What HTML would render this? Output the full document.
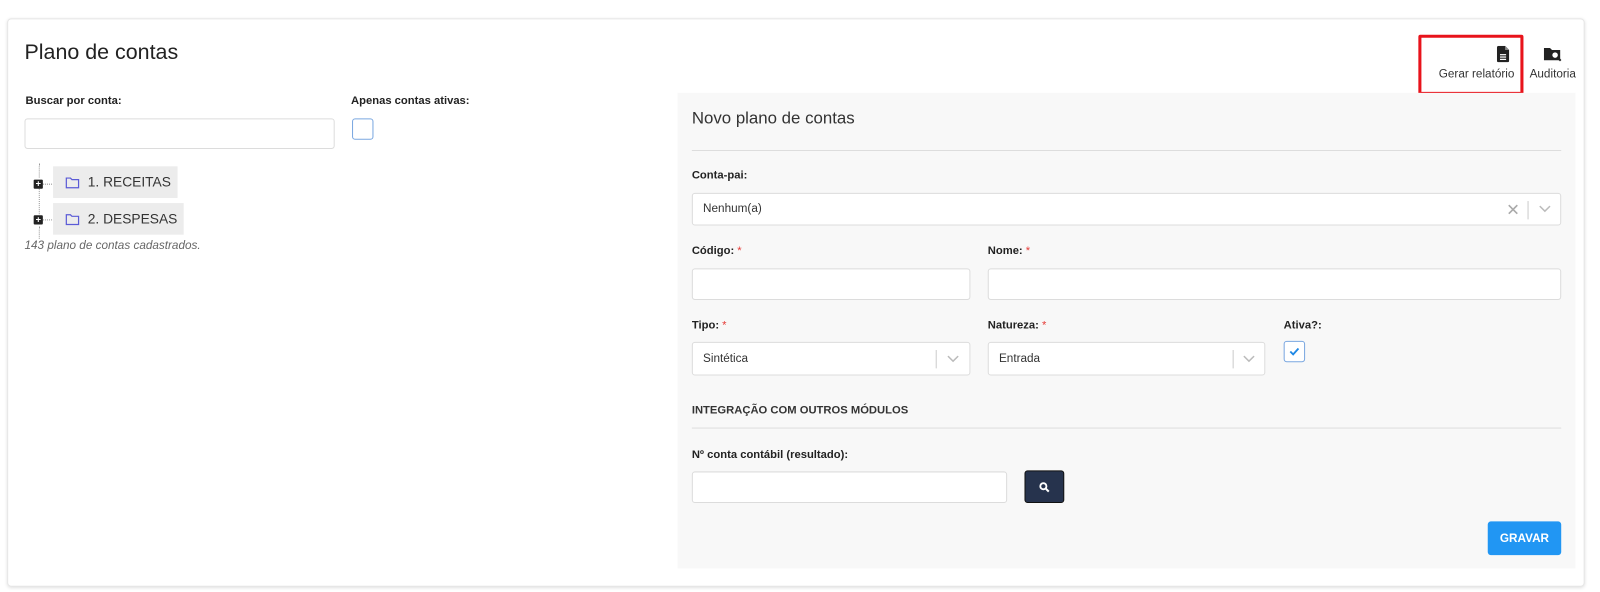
<!DOCTYPE html>
<html><head><meta charset="utf-8">
<style>
*{box-sizing:border-box;margin:0;padding:0}
body{width:1600px;height:592px;background:#fff;font-family:"Liberation Sans",Arial,sans-serif;overflow:hidden;color:#212529}
#w{position:relative;width:1568px;height:580px;transform:scale(1.0204);transform-origin:0 0}
.a{position:absolute}
.card{left:7px;top:18px;width:1546px;height:557px;border:1px solid #e6e6e6;border-radius:4px;box-shadow:0 1px 3px rgba(0,0,0,.12);background:#fff}
.lbl{font-size:11px;font-weight:bold;color:#222}
.req{color:#e53935;font-weight:normal;margin-left:3px}
.inp{background:#fff;border:1px solid #dcdcdc;border-radius:3px}
.sel{font-size:11.5px;color:#333;padding-left:10px;display:flex;align-items:center}
.node{background:#ececec;font-size:13.5px;color:#333;display:flex;align-items:center;padding-left:12px}
.plus{width:9px;height:9px;background:#222;border-radius:1px;color:#fff;font-size:9px;line-height:9px;text-align:center;font-weight:bold}
.dot{border-left:1px dotted #999;width:1px}
.hd{border-top:1px dotted #999;height:1px}
</style></head><body><div id="w">
<div class="a card"></div>
<div class="a" style="left:24px;top:40px;font-size:21px;color:#222">Plano de contas</div>

<div class="a" style="left:1390px;top:34px;width:103px;height:59px;border:3px solid #e8131b;border-radius:2px"></div>
<svg class="a" style="left:1467px;top:45px" width="12" height="16" viewBox="0 0 12 16"><path d="M0 1.5C0 .7.7 0 1.5 0H8l4 4v10.5c0 .8-.7 1.5-1.5 1.5h-9C.7 16 0 15.3 0 14.5z" fill="#222"/><path d="M8 0v4h4" fill="#888"/><rect x="3" y="8" width="6" height="1.2" fill="#fff"/><rect x="3" y="10.3" width="6" height="1.2" fill="#fff"/><rect x="3" y="12.6" width="6" height="1.2" fill="#fff"/></svg>
<div class="a" style="left:1410px;top:67px;font-size:11.5px;color:#333">Gerar relatório</div>
<svg class="a" style="left:1513px;top:45px" width="18" height="16" viewBox="0 0 18 16"><path d="M0 2h6l2 2h8v10H0z" fill="#222"/><circle cx="11" cy="9" r="3.5" fill="#fff" stroke="#222" stroke-width="1.6"/><path d="M13.5 11.5l3 3" stroke="#222" stroke-width="2"/></svg>
<div class="a" style="left:1499px;top:67px;font-size:11.5px;color:#333">Auditoria</div>

<div class="a lbl" style="left:25px;top:93px">Buscar por conta:</div>
<div class="a inp" style="left:24px;top:116px;width:304px;height:30px"></div>
<div class="a lbl" style="left:344px;top:93px">Apenas contas ativas:</div>
<div class="a" style="left:345px;top:116px;width:21px;height:21px;border:1px solid #7aa7e0;border-radius:3px;background:#fff"></div>

<div class="a dot" style="left:38px;top:160px;height:14px"></div>
<div class="a dot" style="left:38px;top:185px;height:25px"></div>
<div class="a dot" style="left:38px;top:222px;height:12px"></div>
<div class="a hd" style="left:42px;top:180px;width:9px"></div>
<div class="a hd" style="left:42px;top:215px;width:9px"></div>
<div class="a plus" style="left:33px;top:176px">+</div>
<div class="a plus" style="left:33px;top:211px">+</div>
<div class="a node" style="left:52px;top:163px;width:122px;height:31px"><svg width="14" height="12" viewBox="0 0 14 12" style="margin-right:8px"><path d="M1 1.5h4l1.5 1.5H13v8H1z" fill="none" stroke="#5b5bd6" stroke-width="1.2"/></svg>1. RECEITAS</div>
<div class="a node" style="left:52px;top:199px;width:128px;height:31px"><svg width="14" height="12" viewBox="0 0 14 12" style="margin-right:8px"><path d="M1 1.5h4l1.5 1.5H13v8H1z" fill="none" stroke="#5b5bd6" stroke-width="1.2"/></svg>2. DESPESAS</div>
<div class="a" style="left:24px;top:235px;font-size:11.5px;font-style:italic;color:#666">143 plano de contas cadastrados.</div>

<div class="a" style="left:664px;top:91px;width:880px;height:466px;background:#f8f8f8"></div>
<div class="a" style="left:678px;top:107px;font-size:16.5px;color:#333">Novo plano de contas</div>
<div class="a" style="left:678px;top:147px;width:852px;border-top:1px solid #ddd"></div>
<div class="a lbl" style="left:678px;top:166px">Conta-pai:</div>
<div class="a inp sel" style="left:678px;top:189px;width:852px;height:32px">Nenhum(a)</div>
<div class="a" style="left:1476px;top:196px;font-size:16px;color:#aaa">✕</div>
<div class="a" style="left:1497px;top:197px;height:18px;border-left:1px solid #ccc"></div>
<svg class="a" style="left:1508px;top:201px" width="12" height="8" viewBox="0 0 12 8"><path d="M1 1l5 5 5-5" fill="none" stroke="#bbb" stroke-width="1.5"/></svg>

<div class="a lbl" style="left:678px;top:240px">Código:<span class="req">*</span></div>
<div class="a inp" style="left:678px;top:263px;width:273px;height:31px"></div>
<div class="a lbl" style="left:968px;top:240px">Nome:<span class="req">*</span></div>
<div class="a inp" style="left:968px;top:263px;width:562px;height:31px"></div>

<div class="a lbl" style="left:678px;top:313px">Tipo:<span class="req">*</span></div>
<div class="a inp sel" style="left:678px;top:335px;width:273px;height:33px">Sintética</div>
<div class="a" style="left:917px;top:343px;height:18px;border-left:1px solid #ccc"></div>
<svg class="a" style="left:928px;top:348px" width="12" height="8" viewBox="0 0 12 8"><path d="M1 1l5 5 5-5" fill="none" stroke="#bbb" stroke-width="1.5"/></svg>
<div class="a lbl" style="left:968px;top:313px">Natureza:<span class="req">*</span></div>
<div class="a inp sel" style="left:968px;top:335px;width:272px;height:33px">Entrada</div>
<div class="a" style="left:1208px;top:343px;height:18px;border-left:1px solid #ccc"></div>
<svg class="a" style="left:1218px;top:348px" width="12" height="8" viewBox="0 0 12 8"><path d="M1 1l5 5 5-5" fill="none" stroke="#bbb" stroke-width="1.5"/></svg>
<div class="a lbl" style="left:1258px;top:313px">Ativa?:</div>
<div class="a" style="left:1258px;top:334px;width:21px;height:21px;border:1px solid #7aa7e0;border-radius:3px;background:#fff"></div>
<svg class="a" style="left:1263px;top:340px" width="11" height="9" viewBox="0 0 11 9"><path d="M1.5 4.5l2.8 2.8L9.5 1.5" fill="none" stroke="#1e88e5" stroke-width="1.8"/></svg>

<div class="a lbl" style="left:678px;top:396px;color:#333">INTEGRAÇÃO COM OUTROS MÓDULOS</div>
<div class="a" style="left:678px;top:419px;width:852px;border-top:1px solid #ddd"></div>
<div class="a lbl" style="left:678px;top:440px">Nº conta contábil (resultado):</div>
<div class="a inp" style="left:678px;top:462px;width:309px;height:31px"></div>
<div class="a" style="left:1004px;top:461px;width:39px;height:32px;background:#26334d;border-radius:3px;border:1px solid #111"></div>
<svg class="a" style="left:1018px;top:472px" width="11" height="11" viewBox="0 0 11 11"><circle cx="4.5" cy="4.5" r="3" fill="none" stroke="#fff" stroke-width="1.8"/><path d="M6.8 6.8l3 3" stroke="#fff" stroke-width="2"/></svg>

<div class="a" style="left:1458px;top:511px;width:72px;height:33px;background:#2196f3;border-radius:3px;color:#fff;font-size:11.5px;font-weight:bold;display:flex;align-items:center;justify-content:center">GRAVAR</div>
</div></body></html>
